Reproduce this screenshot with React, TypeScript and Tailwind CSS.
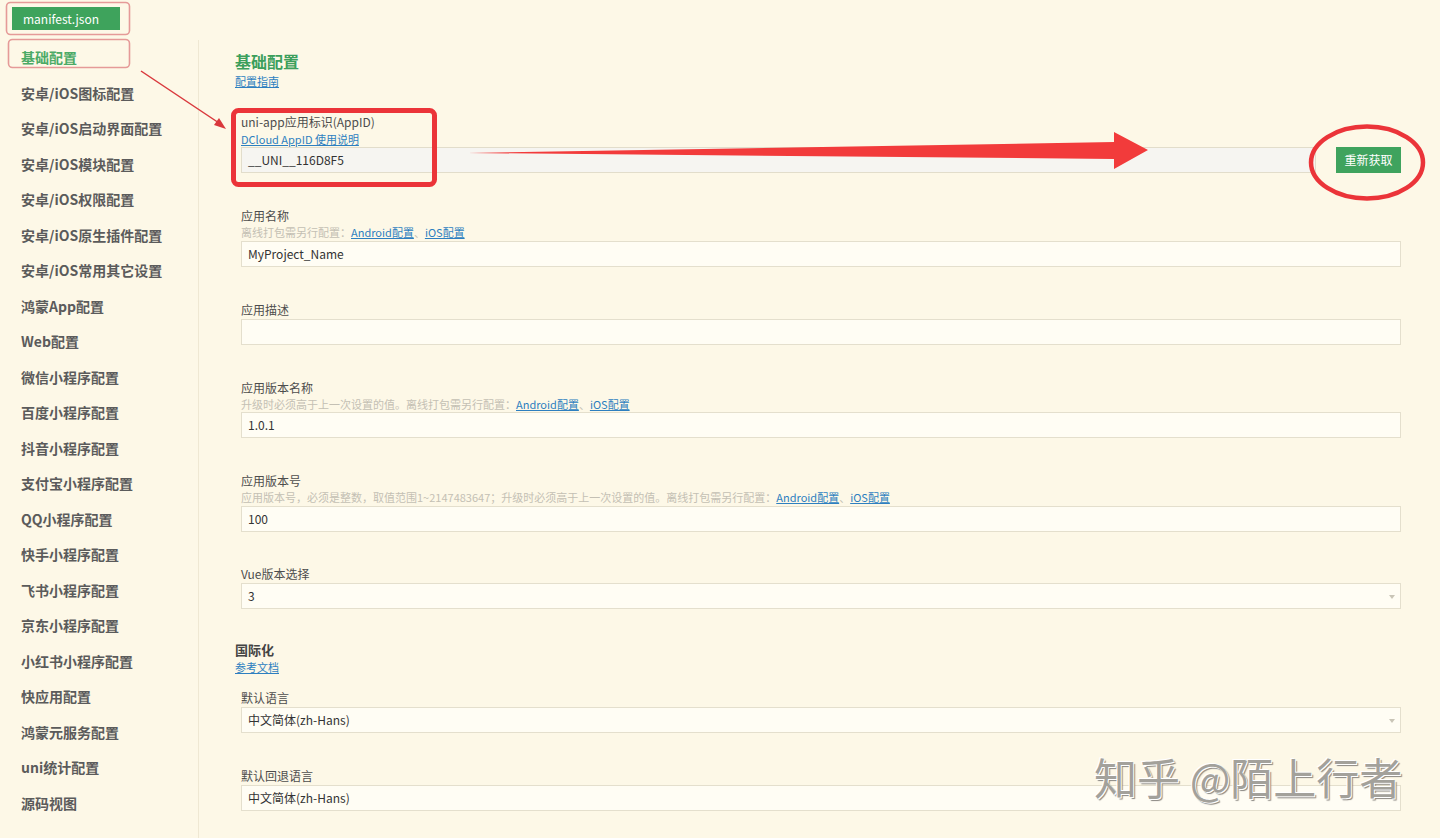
import React from "react";

const FONT = { fontFamily: '"Microsoft YaHei", "Noto Sans CJK SC", "Noto Sans", sans-serif' };

const sideItems = [
  "安卓/iOS图标配置",
  "安卓/iOS启动界面配置",
  "安卓/iOS模块配置",
  "安卓/iOS权限配置",
  "安卓/iOS原生插件配置",
  "安卓/iOS常用其它设置",
  "鸿蒙App配置",
  "Web配置",
  "微信小程序配置",
  "百度小程序配置",
  "抖音小程序配置",
  "支付宝小程序配置",
  "QQ小程序配置",
  "快手小程序配置",
  "飞书小程序配置",
  "京东小程序配置",
  "小红书小程序配置",
  "快应用配置",
  "鸿蒙元服务配置",
  "uni统计配置",
  "源码视图",
];

function Link({ children }: { children: React.ReactNode }) {
  return <span className="text-[#2d7fc0] underline underline-offset-1">{children}</span>;
}

function Desc({ text }: { text: string }) {
  return (
    <div className="h-[14px] mt-[1px] text-[11px] leading-[14px] text-[#c4c0b4] whitespace-nowrap">
      {text}
      <Link>Android配置</Link>
      <span>、</span>
      <Link>iOS配置</Link>
    </div>
  );
}

function Input({ value, select }: { value: string; select?: boolean }) {
  return (
    <div className="relative h-[26px] border border-[#e4dfcd] bg-[#fffdf4] flex items-center pl-[6px] text-[12px] text-[#333]">
      {value}
      {select && (
        <span className="absolute right-[5px] top-[11px] w-0 h-0 border-l-[3px] border-r-[3px] border-t-[4px] border-l-transparent border-r-transparent border-t-[#c9c5b7]" />
      )}
    </div>
  );
}

function Label({ text }: { text: string }) {
  return <div className="h-[16px] text-[12px] leading-[16px] text-[#4d4d4d]">{text}</div>;
}

export default function App() {
  return (
    <div className="relative w-[1440px] h-[838px] overflow-hidden bg-[#fdf8e7] flex" style={FONT}>
      {/* Sidebar */}
      <div className="w-[199px] flex flex-col shrink-0">
        <div className="pt-[7px] pl-[12px]">
          <div className="w-[108px] h-[23px] bg-[#3ea35c] text-white text-[12px] leading-[23px] pl-[11px]">manifest.json</div>
        </div>
        <div className="flex-1 mt-[10px] border-r border-[#efe8d3] pl-[21px] text-[14px]">
          <div className="h-[35.5px] flex items-center font-bold text-[#4caa66]">基础配置</div>
          {sideItems.map((s) => (
            <div key={s} className="h-[35.5px] flex items-center font-bold text-[#5b5b5b]">
              {s}
            </div>
          ))}
        </div>
      </div>

      {/* Main */}
      <div className="flex-1 pl-[36px] pr-[39px] pt-[51px]">
        <div className="h-[20px] text-[16px] leading-[20px] font-bold text-[#3c9f5c]">基础配置</div>
        <div className="mt-[3px] h-[14px] text-[11px] leading-[14px]"><Link>配置指南</Link></div>

        <div className="pl-[6px]">
          {/* AppID */}
          <div className="mt-[26px]">
            <Label text="uni-app应用标识(AppID)" />
            <div className="h-[14px] mt-[2px] text-[11px] leading-[14px]"><Link>DCloud AppID 使用说明</Link></div>
            <div className="mt-[1px] flex gap-[20px]">
              <div className="flex-1 h-[26px] border border-[#e2ddcb] bg-[#f6f5f1] flex items-center pl-[6px] text-[12px] text-[#333]">__UNI__116D8F5</div>
              <div className="w-[65px] h-[26px] bg-[#3fa35e] text-white text-[12px] flex items-center justify-center">重新获取</div>
            </div>
          </div>

          <div className="mt-[35px]">
            <Label text="应用名称" />
            <div className="h-[14px] mt-[1px] text-[11px] leading-[14px] text-[#c4c0b4] whitespace-nowrap">
              离线打包需另行配置：<Link>Android配置</Link>、<Link>iOS配置</Link>
            </div>
            <div className="mt-[2px]"><Input value="MyProject_Name" /></div>
          </div>

          <div className="mt-[35px]">
            <Label text="应用描述" />
            <div className="mt-[1px]"><Input value="" /></div>
          </div>

          <div className="mt-[35px]">
            <Label text="应用版本名称" />
            <Desc text="升级时必须高于上一次设置的值。离线打包需另行配置：" />
            <div className="mt-[1px]"><Input value="1.0.1" /></div>
          </div>

          <div className="mt-[35px]">
            <Label text="应用版本号" />
            <Desc text="应用版本号，必须是整数，取值范围1~2147483647；升级时必须高于上一次设置的值。离线打包需另行配置：" />
            <div className="mt-[2px]"><Input value="100" /></div>
          </div>

          <div className="mt-[34px]">
            <Label text="Vue版本选择" />
            <div className="mt-[1px]"><Input value="3" select /></div>
          </div>
        </div>

        <div className="mt-[32px] h-[18px] text-[13px] leading-[18px] font-bold text-[#444]">国际化</div>
        <div className="h-[14px] mt-[1px] text-[11px] leading-[14px]"><Link>参考文档</Link></div>

        <div className="pl-[6px]">
          <div className="mt-[16px]">
            <Label text="默认语言" />
            <div className="mt-[1px]"><Input value="中文简体(zh-Hans)" select /></div>
          </div>
          <div className="mt-[35px]">
            <Label text="默认回退语言" />
            <div className="mt-[1px]"><Input value="中文简体(zh-Hans)" /></div>
          </div>
        </div>
      </div>

      {/* Annotations overlay */}
      <svg className="absolute inset-0 pointer-events-none" width="1440" height="838" viewBox="0 0 1440 838">
        <rect x="6.5" y="2.5" width="123" height="32" rx="4" fill="none" stroke="#e59a98" strokeWidth="1.6" />
        <rect x="8.5" y="39.5" width="121" height="28" rx="4" fill="none" stroke="#e59a98" strokeWidth="1.6" />
        <line x1="141" y1="71" x2="222" y2="125" stroke="#d9383c" strokeWidth="1.5" />
        <polygon points="226,129 214,125 219,118" fill="#d9383c" />
        <rect x="233.5" y="110.5" width="201" height="74" rx="5" fill="none" stroke="#eb3439" strokeWidth="5" />
        <polygon points="468,153 1114,142 1114,132 1148,150 1114,169 1114,159" fill="#f23b3b" />
        <ellipse cx="1367" cy="162.5" rx="56" ry="36" fill="none" stroke="#eb3439" strokeWidth="4.5" />
      </svg>

      {/* Watermark */}
      <div
        className="absolute left-[1094px] top-[751px] text-[43px] leading-[50px] text-[#a3a19b] whitespace-nowrap pointer-events-none"
        style={{ ...FONT, textShadow: "1px 1px 0 #fff, -1px -1px 0 #fff, 2px 2px 1px #8a8782" }}
      >
        知乎 @陌上行者
      </div>
    </div>
  );
}
